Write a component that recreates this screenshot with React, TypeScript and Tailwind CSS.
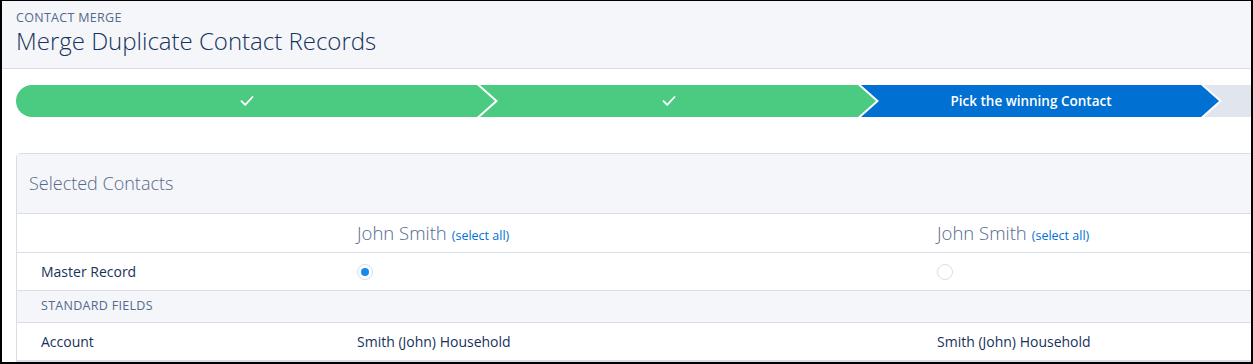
import React from "react";

const font = { fontFamily: '"Open Sans", "Liberation Sans", sans-serif' };

function Check() {
  return (
    <svg width="14" height="12" viewBox="0 0 14 12" fill="none">
      <path d="M1.5 6.2 L5.2 9.8 L12.5 2" stroke="white" strokeWidth="1.8" strokeLinecap="round" strokeLinejoin="round" />
    </svg>
  );
}

export default function App() {
  return (
    <div
      className="w-[1253px] h-[364px] overflow-hidden bg-white border-black border-t border-l-2 border-r-2 border-b-2 box-border"
      style={font}
    >
      {/* Header */}
      <div className="bg-[#f4f6f9] border-b border-[#d8dde6] pl-[14px] pt-[9px] pb-[12px]">
        <div className="text-[12.5px] leading-[16px] uppercase text-[#54698d] tracking-[0.3px]">Contact Merge</div>
        <div className="text-[24px] leading-[30px] font-light text-[#16325c]">Merge Duplicate Contact Records</div>
      </div>

      {/* Path */}
      <div className="mt-4 ml-[14px] flex h-8 overflow-hidden">
        <div className="w-[479px] shrink-0 h-8 bg-[#4bca81] rounded-l-full [clip-path:polygon(0_0,calc(100%-18px)_0,100%_50%,calc(100%-18px)_100%,0_100%)] flex items-center justify-center pr-[18px]">
          <Check />
        </div>
        <div className="w-[396px] shrink-0 -ml-[15px] h-8 bg-[#4bca81] [clip-path:polygon(0_0,calc(100%-18px)_0,100%_50%,calc(100%-18px)_100%,0_100%,18px_50%)] flex items-center justify-center pr-[18px]">
          <Check />
        </div>
        <div className="w-[358px] shrink-0 -ml-[15px] h-8 bg-[#0070d2] [clip-path:polygon(0_0,calc(100%-18px)_0,100%_50%,calc(100%-18px)_100%,0_100%,18px_50%)] flex items-center justify-center pr-[18px]">
          <span className="text-white text-[13.5px] font-semibold">Pick the winning Contact</span>
        </div>
        <div className="flex-1 -ml-[15px] h-8 bg-[#e0e5ee] [clip-path:polygon(0_0,100%_0,100%_100%,0_100%,18px_50%)]" />
      </div>

      {/* Card */}
      <div className="mt-9 ml-[14px] w-[1400px] border border-[#d8dde6] rounded-t-[4px]">
        <div className="h-[60px] bg-[#f4f6f9] border-b border-[#d8dde6] flex items-center pl-3">
          <span className="text-[18px] font-light text-[#54698d]">Selected Contacts</span>
        </div>
        <div className="grid grid-cols-[340px_580px_1fr] h-[39px] border-b border-[#d8dde6] items-center">
          <div />
          <div className="flex items-baseline gap-[5px]">
            <span className="text-[18.5px] font-light text-[#54698d]">John Smith</span>
            <span className="text-[12.5px] text-[#0070d2]">(select all)</span>
          </div>
          <div className="flex items-baseline gap-[5px]">
            <span className="text-[18.5px] font-light text-[#54698d]">John Smith</span>
            <span className="text-[12.5px] text-[#0070d2]">(select all)</span>
          </div>
        </div>
        <div className="grid grid-cols-[340px_580px_1fr] h-[38px] border-b border-[#d8dde6] items-center">
          <div className="pl-6 text-[14px] text-[#16325c]">Master Record</div>
          <div>
            <span className="w-[16px] h-[16px] rounded-full border border-[#d8dde6] bg-white flex items-center justify-center">
              <span className="w-[8px] h-[8px] rounded-full bg-[#1589ee]" />
            </span>
          </div>
          <div>
            <span className="block w-[16px] h-[16px] rounded-full border border-[#d8dde6] bg-white" />
          </div>
        </div>
        <div className="h-[32px] bg-[#f4f6f9] border-b border-[#d8dde6] flex items-center pl-6">
          <span className="text-[12.5px] uppercase text-[#54698d] tracking-[0.3px]">Standard Fields</span>
        </div>
        <div className="grid grid-cols-[340px_580px_1fr] h-[38px] border-b border-[#d8dde6] items-center">
          <div className="pl-6 text-[14px] text-[#16325c]">Account</div>
          <div className="text-[14px] text-[#16325c]">Smith (John) Household</div>
          <div className="text-[14px] text-[#16325c]">Smith (John) Household</div>
        </div>
      </div>
    </div>
  );
}
